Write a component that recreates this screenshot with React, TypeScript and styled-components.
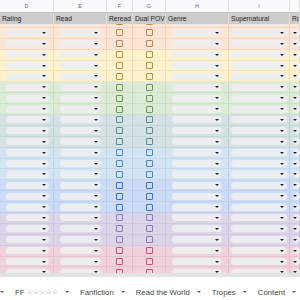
import styled, { createGlobalStyle } from 'styled-components';

const GlobalStyle = createGlobalStyle`
  html, body {
    margin: 0;
    padding: 0;
    background: #ffffff;
  }
  body {
    font-family: "Liberation Sans", Arial, sans-serif;
  }
`;

type Kind = 'dd' | 'cb';

const columns: { letter: string; title: string; kind: Kind; width: string; inL: number; inR: number }[] = [
  { letter: 'D', title: 'Rating', kind: 'dd', width: '54px', inL: 6, inR: 4 },
  { letter: 'E', title: 'Read', kind: 'dd', width: '53px', inL: 6, inR: 5 },
  { letter: 'F', title: 'Reread', kind: 'cb', width: '26px', inL: 0, inR: 0 },
  { letter: 'G', title: 'Dual POV', kind: 'cb', width: '33px', inL: 0, inR: 0 },
  { letter: 'H', title: 'Genre', kind: 'dd', width: '63px', inL: 6, inR: 6 },
  { letter: 'I', title: 'Supernatural', kind: 'dd', width: '61px', inL: 2, inR: 2 },
  { letter: '', title: 'Ro', kind: 'dd', width: '10px', inL: 3, inR: 0 },
];

const template = columns.map((c) => c.width).join(' ');

const bands = [
  { bg: '#fde7d4', box: '#c08550' },
  { bg: '#fff2cc', box: '#b39633' },
  { bg: '#dcebd5', box: '#6a9659' },
  { bg: '#d4e2e5', box: '#5f8a93' },
  { bg: '#d3e4f4', box: '#4a86c8' },
  { bg: '#ccdcf8', box: '#3d6fd0' },
  { bg: '#dcd5ea', box: '#8b79bb' },
  { bg: '#f1d1da', box: '#c25278' },
];

const rows = Array.from({ length: 24 }, (_, i) => bands[Math.floor(i / 3)]);

const tabs = ['', 'FF', 'Fanfiction', 'Read the World', 'Tropes', 'Content'];

const App = () => {
  return (
    <>
      <GlobalStyle />
      <Frame>
        <LetterRow>
          {columns.map((c, i) => (
            <Letter key={i}>{c.letter}</Letter>
          ))}
        </LetterRow>
        <HeaderRow>
          {columns.map((c, i) => (
            <HeaderCell key={i}>{c.title}</HeaderCell>
          ))}
        </HeaderRow>
        <Body>
          <Scrolled>
            {rows.map((band, r) => (
              <Row key={r} $bg={band.bg}>
                {columns.map((c, i) => (
                  <Cell key={i} $center={c.kind === 'cb'}>
                    {c.kind === 'dd' ? (
                      <Chip $l={c.inL} $r={c.inR}>
                        <Caret />
                      </Chip>
                    ) : (
                      <Box $color={band.box} />
                    )}
                  </Cell>
                ))}
              </Row>
            ))}
          </Scrolled>
        </Body>
        <TabBar>
          {tabs.map((t, i) => (
            <Tab key={i} $first={i === 0}>
              {t && (
                <TabLabel>
                  {t}
                  {t === 'FF' && <Stars>☆☆☆☆☆</Stars>}
                </TabLabel>
              )}
              <TabCaret />
            </Tab>
          ))}
        </TabBar>
      </Frame>
    </>
  );
};

const Frame = styled.div`
  width: 300px;
  height: 300px;
  overflow: hidden;
  display: flex;
  flex-direction: column;
  background: #ffffff;
`;

const LetterRow = styled.div`
  display: grid;
  grid-template-columns: ${template};
  height: 13px;
  flex: none;
  background: #f8f9fa;
  border-bottom: 1px solid #c4c7c5;
  box-sizing: border-box;
`;

const Letter = styled.div`
  display: flex;
  align-items: center;
  justify-content: center;
  font-size: 5px;
  color: #5f6368;
  border-right: 1px solid #e1e3e1;
`;

const HeaderRow = styled.div`
  display: grid;
  grid-template-columns: ${template};
  height: 11px;
  flex: none;
  background: #cccccc;
`;

const HeaderCell = styled.div`
  display: flex;
  align-items: center;
  padding-left: 2px;
  font-size: 6.7px;
  color: #222222;
  white-space: nowrap;
  overflow: hidden;
  border-right: 1px solid #dedede;
`;

const Body = styled.div`
  flex: 1;
  overflow: hidden;
`;

const Scrolled = styled.div`
  margin-top: -7px;
`;

const Row = styled.div<{ $bg: string }>`
  display: grid;
  grid-template-columns: ${template};
  height: 10.9px;
  background: ${(p) => p.$bg};
`;

const Cell = styled.div<{ $center: boolean }>`
  display: flex;
  align-items: center;
  justify-content: ${(p) => (p.$center ? 'center' : 'stretch')};
  border-right: 1px solid rgba(0, 0, 0, 0.07);
  border-bottom: 1px solid rgba(0, 0, 0, 0.05);
  box-sizing: border-box;
  min-width: 0;
`;

const Chip = styled.div<{ $l: number; $r: number }>`
  flex: 1;
  height: 7px;
  margin: 0 ${(p) => p.$r}px 0 ${(p) => p.$l}px;
  border-radius: 4px;
  background: rgba(237, 238, 241, 0.95);
  display: flex;
  align-items: center;
  justify-content: flex-end;
  padding-right: 3px;
`;

const Caret = styled.span`
  width: 0;
  height: 0;
  border-left: 2px solid transparent;
  border-right: 2px solid transparent;
  border-top: 2.5px solid #202124;
`;

const Box = styled.span<{ $color: string }>`
  width: 7px;
  height: 7px;
  box-sizing: border-box;
  border: 1.2px solid ${(p) => p.$color};
  border-radius: 1px;
`;

const TabBar = styled.div`
  height: 16px;
  padding-top: 7px;
  flex: none;
  display: flex;
  align-items: center;
  background: #ffffff;
  border-top: 4px solid #e3e3e3;
  white-space: nowrap;
`;

const Tab = styled.div<{ $first: boolean }>`
  display: flex;
  align-items: center;
  gap: 7px;
  padding: ${(p) => (p.$first ? '0 5.5px 0 0' : '0 5.5px')};
  flex: none;
`;

const TabLabel = styled.span`
  font-size: 7.8px;
  color: #444746;
  display: flex;
  align-items: center;
  gap: 2px;
`;

const Stars = styled.span`
  font-family: "DejaVu Sans", sans-serif;
  font-size: 7px;
  color: #80868b;
`;

const TabCaret = styled.span`
  width: 0;
  height: 0;
  border-left: 2px solid transparent;
  border-right: 2px solid transparent;
  border-top: 2.5px solid #5f6368;
`;

export default App;
